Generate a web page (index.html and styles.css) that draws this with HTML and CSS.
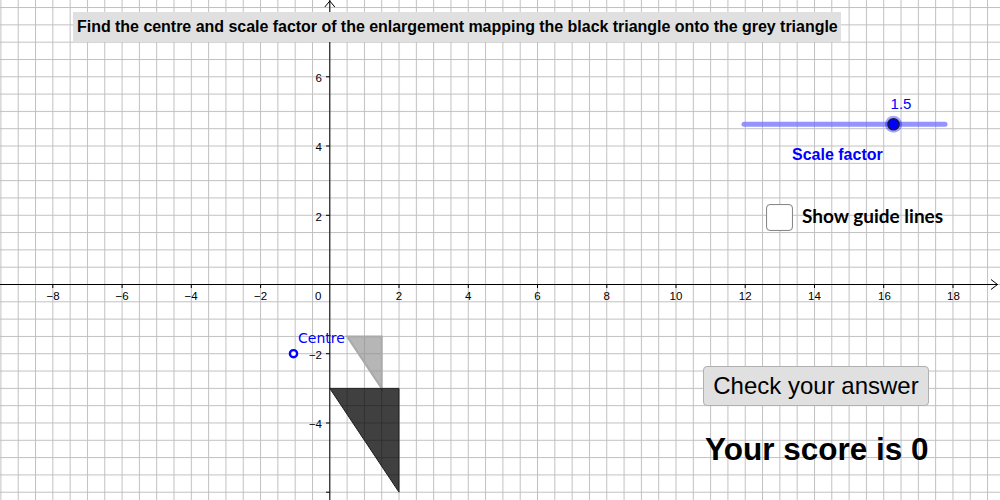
FILE: index.html
```html
<!DOCTYPE html>
<html>
<head>
<meta charset="utf-8">
<link rel="stylesheet" href="styles.css">
</head>
<body>
<div class="stage">
  <svg class="canvas" width="1000" height="500" viewBox="0 0 1000 500">
    <defs>
      <pattern id="grid" patternUnits="userSpaceOnUse" x="329.3" y="284" width="17.31" height="17.31">
        <rect x="0" y="0" width="1" height="17.31" fill="#c0c0c0"/>
        <rect x="0" y="0" width="17.31" height="1" fill="#c0c0c0"/>
      </pattern>
    </defs>
    <rect x="0" y="0" width="1000" height="500" fill="#fff"/>
    <rect x="0" y="0" width="1000" height="500" fill="url(#grid)"/>

    <!-- axes -->
    <g stroke="#000" stroke-width="1" fill="none">
      <line x1="0" y1="284.5" x2="998" y2="284.5"/>
      <polyline points="991,279.5 997.5,284.5 991,289.5"/>
      <line x1="329.8" y1="0" x2="329.8" y2="500"/>
      <polyline points="324.8,7 329.8,1 334.8,7"/>
      <!-- x ticks -->
      <line x1="52.8" y1="284.5" x2="52.8" y2="288"/>
      <line x1="122.1" y1="284.5" x2="122.1" y2="288"/>
      <line x1="191.3" y1="284.5" x2="191.3" y2="288"/>
      <line x1="260.6" y1="284.5" x2="260.6" y2="288"/>
      <line x1="399" y1="284.5" x2="399" y2="288"/>
      <line x1="468.3" y1="284.5" x2="468.3" y2="288"/>
      <line x1="537.5" y1="284.5" x2="537.5" y2="288"/>
      <line x1="606.8" y1="284.5" x2="606.8" y2="288"/>
      <line x1="676" y1="284.5" x2="676" y2="288"/>
      <line x1="745.2" y1="284.5" x2="745.2" y2="288"/>
      <line x1="814.5" y1="284.5" x2="814.5" y2="288"/>
      <line x1="883.7" y1="284.5" x2="883.7" y2="288"/>
      <line x1="953" y1="284.5" x2="953" y2="288"/>
      <!-- y ticks -->
      <line x1="326" y1="76.8" x2="329.8" y2="76.8"/>
      <line x1="326" y1="146" x2="329.8" y2="146"/>
      <line x1="326" y1="215.3" x2="329.8" y2="215.3"/>
      <line x1="326" y1="353.7" x2="329.8" y2="353.7"/>
      <line x1="326" y1="423" x2="329.8" y2="423"/>
      <line x1="326" y1="492.2" x2="329.8" y2="492.2"/>
    </g>

    <g class="axis-label" text-anchor="middle">
      <text x="53" y="299.5">−8</text>
      <text x="122" y="299.5">−6</text>
      <text x="191" y="299.5">−4</text>
      <text x="260.5" y="299.5">−2</text>
      <text x="399" y="299.5">2</text>
      <text x="468.3" y="299.5">4</text>
      <text x="537.5" y="299.5">6</text>
      <text x="606.8" y="299.5">8</text>
      <text x="676" y="299.5">10</text>
      <text x="745.2" y="299.5">12</text>
      <text x="814.5" y="299.5">14</text>
      <text x="884.5" y="299.5">16</text>
      <text x="953.5" y="299.5">18</text>
    </g>
    <g class="axis-label" text-anchor="end">
      <text x="321.5" y="299.5">0</text>
      <text x="322" y="82">6</text>
      <text x="322" y="151">4</text>
      <text x="322" y="220.5">2</text>
      <text x="322" y="359">−2</text>
      <text x="322" y="428">−4</text>
    </g>

    <!-- triangles -->
    <polygon points="347.1,336.4 381.7,336.4 381.7,388.4" fill="#8f8f8f" fill-opacity="0.65" stroke="#aaaaaa" stroke-width="2"/>
    <polygon points="329.8,388.4 399,388.4 399,492.2" fill="#000" fill-opacity="0.75" stroke="#222" stroke-width="1"/>

    <!-- centre point -->
    <circle cx="293.5" cy="353.7" r="3.6" fill="#fff" stroke="#0000ff" stroke-width="2.4"/>
    <text class="point-label" x="298" y="343.3">Centre</text>

    <!-- slider -->
    <line x1="744" y1="124.3" x2="945" y2="124.3" stroke="#7070ff" stroke-opacity="0.75" stroke-width="5" stroke-linecap="round"/>
    <circle cx="893.5" cy="124.3" r="8.5" fill="#0000ff" fill-opacity="0.35"/>
    <circle cx="893.5" cy="124.3" r="5.6" fill="#0000ff" stroke="#1a1a3a" stroke-width="1.4"/>
    <text class="slider-value" x="901" y="109.3" text-anchor="middle">1.5</text>
    <text class="slider-caption" x="792" y="160">Scale factor</text>
  </svg>

  <div class="title">Find the centre and scale factor of the enlargement mapping the black triangle onto the grey triangle</div>

  <label class="guide">
    <span class="box"></span>
    <span class="guide-text">Show guide lines</span>
  </label>

  <button class="check">Check your answer</button>

  <div class="score">Your score is 0</div>
</div>
</body>
</html>
```
FILE: styles.css
```css
html, body {
  margin: 0;
  padding: 0;
  background: #fff;
}

.stage {
  position: relative;
  width: 1000px;
  height: 500px;
  overflow: hidden;
  font-family: "Liberation Sans", Arial, sans-serif;
}

.canvas {
  display: block;
}

.axis-label {
  font-family: "Liberation Sans", Arial, sans-serif;
  font-size: 11.5px;
  fill: #000;
}

.point-label {
  font-family: "DejaVu Sans", sans-serif;
  font-size: 14px;
  fill: #0000ff;
}

.slider-value {
  font-family: "Liberation Sans", Arial, sans-serif;
  font-size: 15px;
  fill: #0000ff;
}

.slider-caption {
  font-family: "Liberation Sans", Arial, sans-serif;
  font-size: 16px;
  font-weight: bold;
  fill: #0000ff;
}

.title {
  position: absolute;
  left: 73px;
  top: 12px;
  height: 30px;
  line-height: 30px;
  padding: 0 3px 0 4px;
  background: #e0e0e0;
  font-size: 16px;
  font-weight: bold;
  letter-spacing: -0.03px;
  color: #000;
  white-space: nowrap;
}

.guide {
  position: absolute;
  left: 766px;
  top: 204px;
  display: flex;
  align-items: center;
  gap: 9px;
}

.box {
  width: 25px;
  height: 25px;
  border: 1px solid #888;
  border-radius: 4px;
  background: #fff;
  box-shadow: inset 0 0 1px #bbb;
}

.guide-text {
  font-family: Lato, sans-serif;
  font-weight: bold;
  font-size: 19px;
  line-height: 22px;
  margin-top: -3px;
  color: #000;
}

.check {
  position: absolute;
  left: 703px;
  top: 366px;
  width: 226px;
  height: 40px;
  margin: 0;
  padding: 0;
  border: 1px solid #b0b0b0;
  border-radius: 4px;
  background: #e0e0e0;
  font-family: "Liberation Sans", Arial, sans-serif;
  font-size: 24px;
  color: #000;
  text-align: center;
}

.score {
  position: absolute;
  left: 705px;
  top: 431px;
  font-size: 31.5px;
  line-height: 36px;
  font-weight: bold;
  color: #000;
  white-space: nowrap;
}
```
